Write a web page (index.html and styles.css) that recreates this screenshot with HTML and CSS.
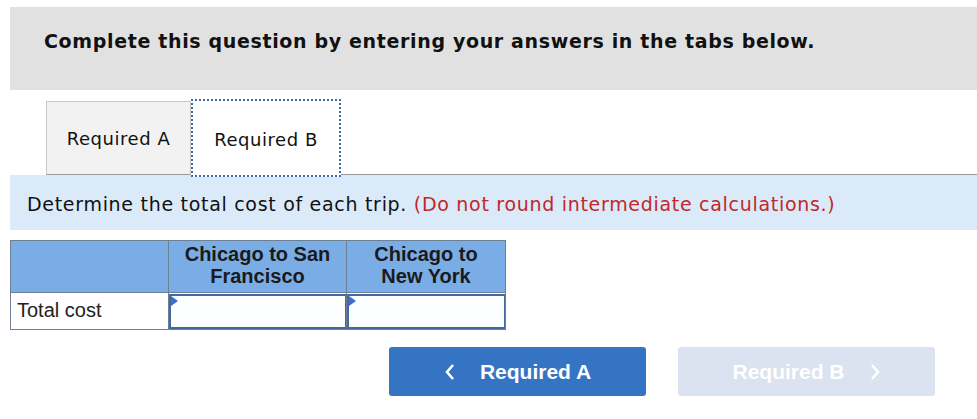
FILE: index.html
```html
<!DOCTYPE html>
<html>
<head>
<meta charset="utf-8">
<link rel="stylesheet" href="styles.css">
</head>
<body>
<div class="page">
  <div class="header">Complete this question by entering your answers in the tabs below.</div>
  <div class="tabs">
    <div class="tab tab-a">Required A</div>
    <div class="tab tab-b">Required B</div>
    <div class="tab-fill"></div>
  </div>
  <div class="band">Determine the total cost of each trip. <span class="note">(Do not round intermediate calculations.)</span></div>
  <table class="grid">
    <tr class="head">
      <th class="c1"></th>
      <th class="c2">Chicago to San<br>Francisco</th>
      <th class="c3">Chicago to<br>New York</th>
    </tr>
    <tr class="row">
      <td class="label">Total cost</td>
      <td class="input"><div class="box"><span class="tri"></span></div></td>
      <td class="input"><div class="box"><span class="tri"></span></div></td>
    </tr>
  </table>
  <div class="nav">
    <div class="btn btn-prev"><svg class="chev" width="12" height="18" viewBox="0 0 12 18"><path d="M9 2 L3 9 L9 16" fill="none" stroke="#fff" stroke-width="2.6"/></svg><span>Required A</span></div>
    <div class="btn btn-next"><span>Required B</span><svg class="chev" width="12" height="18" viewBox="0 0 12 18"><path d="M3 2 L9 9 L3 16" fill="none" stroke="#fff" stroke-width="2.6"/></svg></div>
  </div>
</div>
</body>
</html>
```

FILE: styles.css
```css
html, body { margin: 0; padding: 0; background: #fff; }
.page { padding: 7px 0 0 10px; }
.header {
  height: 83px;
  background: #e1e1e1;
  box-sizing: border-box;
  padding-left: 34px;
  padding-bottom: 16px;
  display: flex;
  align-items: center;
  font-family: "DejaVu Sans", Verdana, sans-serif;
  font-weight: bold;
  font-size: 19px;
  letter-spacing: 0.65px;
  color: #111;
}
.tabs {
  display: flex;
  align-items: flex-end;
  margin-top: 11px;
  padding-left: 36px;
  height: 74px;
}
.tab {
  box-sizing: border-box;
  font-family: "DejaVu Sans", Verdana, sans-serif;
  font-size: 18px;
  letter-spacing: 0.55px;
  color: #111;
  display: flex;
  align-items: center;
  justify-content: center;
}
.tab-a {
  width: 145px;
  height: 74px;
  background: #f2f2f2;
  border: 1px solid #c8c8c8;
  border-bottom: 1px solid #999;
  padding-top: 1px;
}
.tab-b {
  width: 150px;
  height: 78px;
  margin-bottom: -2px;
  background: #fff;
  border: 2px dotted #3d6aa8;
  padding-top: 2px;
  position: relative;
  z-index: 2;
}
.tab-fill {
  flex: 1;
  border-bottom: 1px solid #999;
}
.band {
  height: 55px;
  background: #dbeaf8;
  box-sizing: border-box;
  padding-left: 17px;
  padding-top: 3px;
  display: flex;
  align-items: center;
  font-family: "DejaVu Sans", Verdana, sans-serif;
  font-size: 19px;
  letter-spacing: 0.7px;
  color: #111;
  white-space: pre;
}
.note { color: #c0282a; }
.grid {
  margin-top: 10px;
  border-collapse: collapse;
  font-family: "Liberation Sans", Arial, sans-serif;
}
.head th {
  background: #7aace6;
  height: 52px;
  box-sizing: border-box;
  border: 1px solid #6f7f93;
  font-size: 20px;
  font-weight: bold;
  color: #1a1a1a;
  line-height: 22px;
  padding: 0 0 4px;
  vertical-align: middle;
}
.c1 { width: 158px; }
.c2 { width: 178px; }
.c3 { width: 159px; }
.row td {
  height: 37px;
  box-sizing: border-box;
  border: 1px solid #6f7f93;
  padding: 0;
}
.label {
  font-size: 20px;
  color: #222;
  padding-left: 6px !important;
  padding-bottom: 2px !important;
}
.input { background: #fff; }
.box {
  height: 35px;
  box-sizing: border-box;
  border: 2px solid #44689f;
  border-right-width: 1px;
  position: relative;
  background: #fdfeff;
}
.tri {
  position: absolute;
  left: 0;
  top: 0;
  width: 0;
  height: 0;
  border-top: 5px solid transparent;
  border-bottom: 5px solid transparent;
  border-left: 7px solid #3a6fd0;
}
.nav {
  display: flex;
  gap: 32px;
  margin-top: 17px;
  padding-left: 379px;
}
.btn {
  width: 257px;
  height: 49px;
  border-radius: 3px;
  display: flex;
  align-items: center;
  justify-content: center;
  gap: 24px;
  font-family: "Liberation Sans", Arial, sans-serif;
  font-weight: bold;
  font-size: 21px;
  color: #fff;
}
.btn-prev { background: #3574c2; }
.btn-next { background: #dbe3f0; }
.chev { display: block; }
```
